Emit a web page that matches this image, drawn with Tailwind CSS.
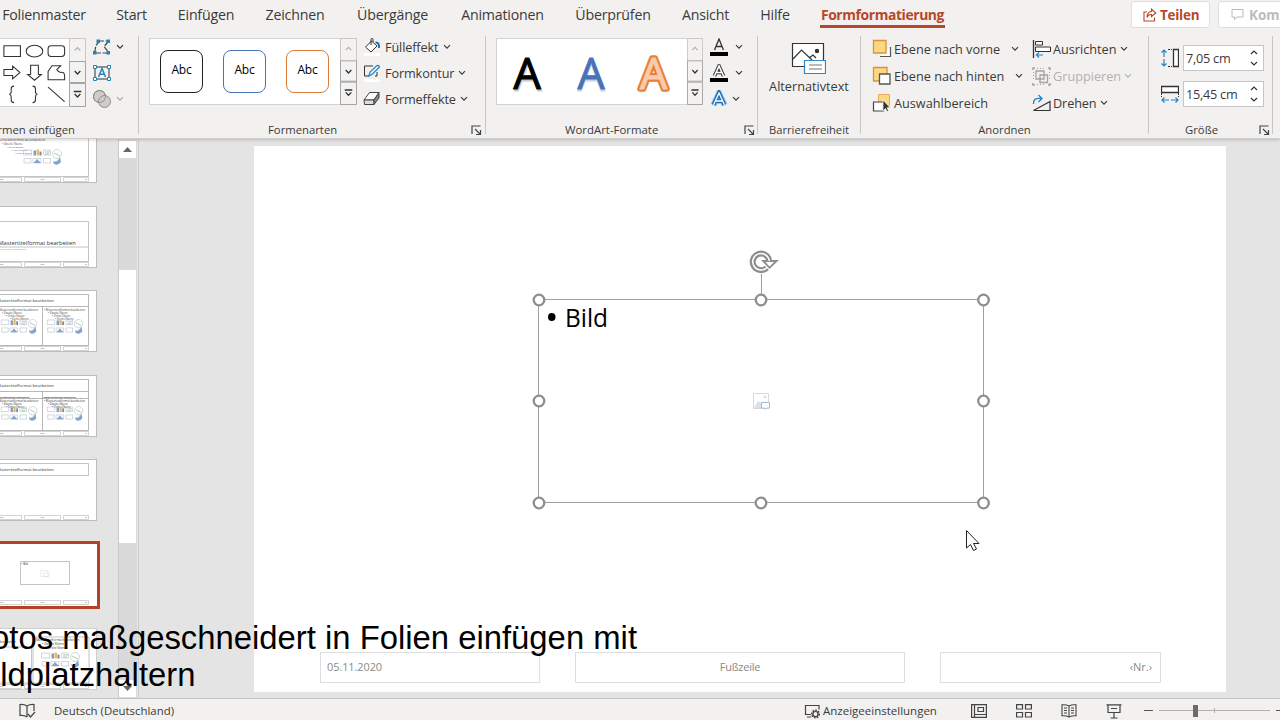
<!DOCTYPE html>
<html lang="de">
<head>
<meta charset="utf-8">
<title>Folienmaster</title>
<script src="https://cdn.jsdelivr.net/npm/@tailwindcss/browser@4"></script>
</head>
<body class="relative w-[1280px] h-[720px] overflow-hidden bg-[#e4e4e4] font-['Open_Sans','Noto_Sans',sans-serif] text-[#3b3a39] flex flex-col">

<svg class="hidden">
  <symbol id="chev" viewBox="0 0 8 6"><path d="M1 1.2 4 4.2 7 1.2" fill="none" stroke="currentColor" stroke-width="1.2"/></symbol>
  <symbol id="launch" viewBox="0 0 11 11"><path d="M1 9V1H9.500M4 4l5 5M9.500 5v4.500H5" fill="none" stroke="#444" stroke-width="1.200"/></symbol>
  <symbol id="spin" viewBox="0 0 18 69">
    <path d="M.5.5h17v68H.5z" fill="#f3f2f1" stroke="#c8c6c4"/>
    <path d="M.5 23.500h17v21H.5zM.5 45.500h17v23H.5z" fill="#f3f2f1" stroke="#a3a19f"/>
    <path d="m6 12.500 3-3 3 3" fill="none" stroke="#b0aeac" stroke-width="1.200"/>
    <path d="m6 33 3 3 3-3M5 53.500h8M6 56l3 3 3-3" fill="none" stroke="#333" stroke-width="1.400"/>
  </symbol>
  <symbol id="cluster" viewBox="0 0 40 16">
    <g fill="none" stroke="#bcc5cf" stroke-width=".7"><path d="M.5 1h8v5h-8zM20.500 1h7v5h-7zM1 9.500h7V14H1zM10 9.500h8V14h-8zM20.500 9.500h7V14h-7z"/><circle cx="34" cy="5" r="4.500"/></g>
    <path d="M10.500 1.500h2.500v5h-2.500z" fill="#7f9fc4"/><path d="M13.500.5h2.500v6h-2.500z" fill="#e6b878"/><path d="M16.500 2.500h2v4h-2z" fill="#7d8a97"/>
    <path d="m10.500 14 3.500-4 4 4zM30 12q4 2 7-4l1 5q-3 4-7 2z" fill="#84a4d0"/><path d="M22 3h5M22 5h4M31 4l6 3" stroke="#9db99d" stroke-width=".8"/>
  </symbol>
  <symbol id="foot" viewBox="0 0 96 5">
    <path d="M-2 .5h23.500v4H-2zM24.500.5h36v4h-36zM63.500.5h25v4h-25z" fill="none" stroke="#c0c0c0" stroke-width=".7"/>
    <path d="M0 2.500h3.500M40.500 2.500h4M85 2.500h2" stroke="#aaa" stroke-width=".7"/>
  </symbol>
</svg>

<!-- Ribbon -->
<header class="relative z-10 h-[139px] shrink-0 bg-[#f2f1f0] border-b border-[#cfcecd] shadow-[0_1px_3px_rgba(0,0,0,0.18)] flex flex-col">
  <nav class="h-[36px] shrink-0 flex items-start pl-[2px] text-[14.2px] leading-[30px] whitespace-nowrap text-center">
    <div class="flex gap-[30px] *:flex *:justify-center tracking-[-0.015em]">
      <span class="w-[84px]">Folienmaster</span><span class="w-[31px]">Start</span><span class="w-[58px]">Einfügen</span><span class="w-[60px]">Zeichnen</span><span class="w-[75px]">Übergänge</span><span class="w-[85px]">Animationen</span><span class="w-[76px]">Überprüfen</span><span class="w-[49px]">Ansicht</span><span class="w-[30px]">Hilfe</span>
      <span class="w-[125px] h-[28px] border-b-[3px] border-[#b7472a] text-[#b7472a] font-bold text-[13.9px] tracking-[-0.028em]">Formformatierung</span>
    </div>
    <div class="ml-auto mr-[-30px] mt-[1px] flex gap-[8px] leading-[26px] font-bold *:shrink-0">
      <div class="w-[79px] h-[27px] bg-white border border-[#e1dfdd] rounded-[3px] flex items-center pl-[11px] gap-[3px] text-[#b7472a] text-[13.5px] tracking-[-0.02em]">
        <svg class="w-[14px] h-[14px] shrink-0" viewBox="0 0 14 14" fill="none" stroke="#b7472a" stroke-width="1.100"><path d="M4 4H1v9h10.500V9.500M8.500 1.200 12.800 5 8.500 8.500V6.500C6 6.300 4.500 7.500 4 9.500 4 6 5.500 3.800 8.500 3.500z"/></svg>Teilen</div>
      <div class="w-[92px] h-[27px] bg-white border border-[#e1dfdd] rounded-[3px] flex items-center pl-[12px] gap-[5px] text-[#bdbbb9] text-[13.5px]">
        <svg class="w-[13px] h-[13px] shrink-0" viewBox="0 0 13 13" fill="none" stroke="#bdbbb9"><path d="M1 1.500h11v7.500H6L3.500 11.500V9H1z"/></svg>Kommentare</div>
    </div>
  </nav>

  <div class="h-[102px] shrink-0 flex text-[12.7px] leading-[18px] whitespace-nowrap">
    <section class="w-[139px] h-[98px] border-r border-[#c8c6c4] flex flex-col">
      <div class="h-[85px] shrink-0 flex pt-[2px]">
        <svg class="w-[69px] h-[69px] bg-white border-y border-[#d5d3d1]" viewBox="0.5 -0.5 69 69" fill="none" stroke="#333" stroke-width="1.100">
          <path d="M3.500 6.500h17v11h-17z"/><ellipse cx="35" cy="12" rx="8.500" ry="6"/><rect x="49" y="6.500" width="17" height="11" rx="3"/>
          <path d="M3.500 31h9v-3.500l7.500 6.500-7.500 6.500V37h-9zM31 26.500h8v9.500h3l-7 6-7-6h3z"/>
          <path d="M49 41.500V33l4-6h9l-4 4q2 3 4 3 4-1 4 4v3.500z"/>
          <path d="M14 48q-3 0-3 3v3q0 2-2 2.500 2 .5 2 2.500v3q0 3 3 3M33 48q3 0 3 3v3q0 2 2 2.500-2 .5-2 2.500v3q0 3-3 3M49 49l17 15"/>
        </svg>
        <svg class="w-[17px] h-[69px]" preserveAspectRatio="none" viewBox="0 0 18 69"><use href="#spin"/></svg>
        <div class="ml-[7px] flex flex-col gap-[8px] text-[#333]">
          <div class="flex items-center gap-[5px] h-[18px]">
            <svg class="w-[18px] h-[16px]" viewBox="0 0 18 16"><path d="M2 13Q2 6 6 3M15 3l-4 4.500 4 5M3 14h12M6 2h9" fill="none" stroke="#444" stroke-width="1.200" stroke-dasharray="5 1.500"/><path d="M3.500.5h3.500V4H3.500zM13.500.5H17V4h-3.500zM0 12h3.500v3.500H0zM13.500 12H17v3.500h-3.500z" fill="#2484b8"/></svg>
            <svg class="w-[8px] h-[6px]"><use href="#chev"/></svg></div>
          <svg class="w-[18px] h-[18px]" viewBox="0 0 18 18"><path d="M2 3h14v12H2z" fill="none" stroke="#333"/><path d="M5.500 13 9 4.500 12.500 13M6.800 10.300h4.400" stroke="#2484c8" stroke-width="1.500" fill="none"/><path d="M.5 1.500h3v3h-3zM14.500 1.500h3v3h-3zM.5 13.500h3v3h-3zM14.500 13.500h3v3h-3z" fill="#fff" stroke="#2484b8"/></svg>
          <div class="flex items-center gap-[5px] h-[18px] text-[#aaa]">
            <svg class="w-[18px] h-[18px]" viewBox="0 0 18 18" fill="#cfcdcb" stroke="#8f8d8b"><circle cx="6.500" cy="6.500" r="6"/><circle cx="11.500" cy="11.500" r="6"/><circle cx="6.500" cy="6.500" r="6" fill="none"/></svg>
            <svg class="w-[8px] h-[6px]"><use href="#chev"/></svg></div>
        </div>
      </div>
      <div class="w-[75px] h-[18px] shrink-0 flex justify-end text-[11.3px]">Formen einfügen</div>
    </section>

    <section class="w-[347px] h-[98px] border-r border-[#c8c6c4] flex flex-col">
      <div class="h-[85px] shrink-0 flex pt-[2px] pl-[10px]">
        <div class="w-[191px] h-[67px] bg-white border border-[#d5d3d1] border-r-0 flex items-center pl-[10px] gap-[20px] text-[12px] text-black *:size-[43px] *:rounded-[8px] *:border-[1.5px] *:flex *:items-center *:justify-center *:pb-[3px] tracking-[-0.02em]">
          <span class="border-[#222]">Abc</span><span class="border-[#4a72b8]">Abc</span><span class="border-[#e07b35]">Abc</span>
        </div>
        <svg class="w-[17px] h-[67px]" preserveAspectRatio="none" viewBox="0 0 18 69"><use href="#spin"/></svg>
        <div class="ml-[6px] flex flex-col gap-[8px] *:flex *:items-center *:h-[18px]">
          <div><svg class="w-[18px] h-[18px] mr-[4px]" viewBox="0 0 18 18"><path d="M1 15h16v3H1z" fill="#fff"/><path d="m8.500 3-6 6 5.500 5 6-6zM8 7V1.500q0-1 1-1t1 1V4" fill="#fff" stroke="#333"/><path d="M12.500 4.500q4-.5 3.500 5.500" fill="none" stroke="#1f6fb0" stroke-width="2"/></svg><span class="w-[55px] tracking-[-0.01em]">Fülleffekt</span><svg class="w-[8px] h-[6px] ml-[3px]"><use href="#chev"/></svg></div>
          <div><svg class="w-[18px] h-[18px] mr-[4px]" viewBox="0 0 18 18"><path d="M1 15h16v3H1z" fill="#fff"/><path d="M10 2H1.500v10H6M12 12h2V8" fill="none" stroke="#333"/><path d="m6 12 1-4 7-6.500q2-.5 2.500 1.500L9.500 10z" fill="#e5f1fa" stroke="#2484c8" stroke-width="1.200"/></svg><span class="w-[71px] tracking-[-0.01em]">Formkontur</span><svg class="w-[8px] h-[6px] ml-[2px]"><use href="#chev"/></svg></div>
          <div><svg class="w-[18px] h-[18px] mr-[4px]" viewBox="0 0 18 18"><path d="M6.500 2.500H16L11 10H1z" fill="#fff" stroke="#444"/><path d="M1 10h10v4.500H1.500z" fill="#ddd" stroke="#444"/><path d="M16 2.500V8l-5 6.500V10z" fill="#888" stroke="#444"/></svg><span class="w-[72px] tracking-[-0.01em]">Formeffekte</span><svg class="w-[8px] h-[6px] ml-[3px]"><use href="#chev"/></svg></div>
        </div>
      </div>
      <div class="h-[18px] shrink-0 flex items-center text-[11.3px]"><span class="ml-[129px] w-[69px]">Formenarten</span><svg class="ml-auto mr-[3px] w-[11px] h-[11px]"><use href="#launch"/></svg></div>
    </section>

    <section class="w-[272px] h-[98px] border-r border-[#c8c6c4] flex flex-col">
      <div class="h-[85px] shrink-0 flex pt-[2px] pl-[10px]">
        <svg class="w-[191px] h-[67px] bg-white border border-[#d5d3d1] border-r-0" viewBox="0 0 190 65" font-family="Open Sans, sans-serif" stroke-linejoin="round" font-size="43" text-anchor="middle">
          <text x="31" y="51.500" fill="#ccc" stroke="#ccc" stroke-width="1">A</text>
          <text x="30" y="50" fill="#000" stroke="#000" stroke-width="1.200">A</text>
          <text x="94" y="51.500" fill="#c8d3e8" stroke="#c8d3e8">A</text>
          <text x="94" y="50" fill="#4a72b8" stroke="#4a72b8" stroke-width=".8">A</text>
          <text x="156.500" y="49.500" fill="#e8803c" stroke="#e8803c" stroke-width="5.500">A</text><text x="156.500" y="49.500" fill="#f8cbad" stroke="#f8cbad" stroke-width="1">A</text>
        </svg>
        <svg class="w-[16px] h-[67px]" preserveAspectRatio="none" viewBox="0 0 18 69"><use href="#spin"/></svg>
        <div class="ml-[7px] flex flex-col gap-[8px] *:flex *:items-center *:h-[18px] *:gap-[7px]">
          <div><svg class="w-[18px] h-[18px]" viewBox="0 0 18 18"><path d="M4.500 12 9 1l4.500 11M6 8.500h6" fill="none" stroke="#333" stroke-width="1.300"/><path d="M0 14h18v4H0z"/></svg><svg class="w-[8px] h-[6px]"><use href="#chev"/></svg></div>
          <div><svg class="w-[18px] h-[18px]" viewBox="0 0 18 18"><path d="M4.500 12 9 2l4.500 10M6 8.500h6" fill="none" stroke="#333" stroke-width="3.600"/><path d="M4.500 12 9 2l4.500 10M6 8.500h6" fill="none" stroke="#fff" stroke-width="1.600"/><path d="M0 14h18v4H0z"/></svg><svg class="w-[8px] h-[6px]"><use href="#chev"/></svg></div>
          <div><svg class="w-[18px] h-[18px] mr-[-3px]" viewBox="0 0 18 18" fill="none"><path d="M3.500 15 9 3l5.500 12M5.500 11h7" stroke="#8cc4ee" stroke-width="6"/><path d="M3.500 15 9 3l5.500 12M5.500 11h7" stroke="#1c6db5" stroke-width="4"/><path d="M3.500 15 9 3l5.500 12M5.500 11h7" stroke="#fff" stroke-width="1.300"/></svg><svg class="w-[8px] h-[6px]"><use href="#chev"/></svg></div>
        </div>
      </div>
      <div class="h-[18px] shrink-0 flex items-center text-[11.4px]"><span class="ml-[79px] w-[95px]">WordArt-Formate</span><svg class="ml-auto mr-[2px] w-[11px] h-[11px]"><use href="#launch"/></svg></div>
    </section>

    <section class="w-[103px] h-[98px] border-r border-[#c8c6c4] flex flex-col items-center">
      <div class="h-[85px] shrink-0 flex flex-col items-center pt-[6px]">
        <svg class="w-[35px] h-[33px]" viewBox="0 0 35 33" fill="none" stroke="#333" stroke-width="1.200"><path d="M1.500 1.500h31v23h-31z" fill="#fff"/><path d="m2 17 8.500-9L21 18M18 16l4-3 3 3"/><circle cx="26" cy="9" r="1.600" fill="#333"/><path d="M13.500 18.500h21v13h-21z" fill="#fff" stroke="#2b88c8"/><path d="M18 23h13M18 27h13" stroke="#777"/></svg>
        <span class="mt-[2px]">Alternativtext</span>
      </div>
      <div class="h-[18px] shrink-0 text-[11.2px]">Barrierefreiheit</div>
    </section>

    <section class="w-[288px] h-[98px] border-r border-[#c8c6c4] flex flex-col">
      <div class="h-[85px] shrink-0 flex pt-[4px] pl-[11px]">
        <div class="w-[160px] flex flex-col gap-[9px] *:flex *:items-center *:h-[18px]">
          <div><svg class="w-[20px] h-[20px] mr-[2px]" viewBox="0 0 20 20"><path d="M8 17.500h10.500V8" fill="#fff" stroke="#555" stroke-width="1.200"/><path d="M1.500 1.500h12.500v12.500H1.500z" fill="#fbd982" stroke="#dc9138" stroke-width="1.300"/></svg><span class="w-[106px]">Ebene nach vorne</span><svg class="w-[8px] h-[6px] ml-[11px]"><use href="#chev"/></svg></div>
          <div><svg class="w-[20px] h-[20px] mr-[2px]" viewBox="0 0 20 20"><path d="M1.500 1.500H15V15H1.500z" fill="#fbd982" stroke="#dc9138" stroke-width="1.300"/><path d="M7.500 8H18v10H7.500z" fill="#fff" stroke="#555" stroke-width="1.300"/></svg><span class="w-[110px]">Ebene nach hinten</span><svg class="w-[8px] h-[6px] ml-[11px]"><use href="#chev"/></svg></div>
          <div><svg class="w-[20px] h-[20px] mr-[2px]" viewBox="0 0 20 20"><path d="M6.500 1.500H17.500v11h-11z" fill="#fbd982" stroke="#e5ac60"/><path d="M1.500 9h10v9h-10z" fill="#fff" stroke="#444" stroke-width="1.200"/><path d="M11 7v11l2.500-2.500 1.500 3 1.600-.8-1.500-3h3z" fill="#333" stroke="#fff" stroke-width=".7"/></svg><span>Auswahlbereich</span></div>
        </div>
        <div class="flex flex-col gap-[9px] *:flex *:items-center *:h-[18px]">
          <div><svg class="w-[19px] h-[19px] mr-[2px]" viewBox="0 0 19 19" fill="none" stroke="#333"><path d="M1.500 0v18" stroke-width="1.300"/><path d="M3.500 1.500h7v3.500h-7zM3.500 7h15v4.500h-15z" fill="#fff"/><path d="M11 15H4.500M7 12.500 4.500 15 7 17.500" stroke="#2484c8" stroke-width="1.200"/></svg><span class="w-[63px]">Ausrichten</span><svg class="w-[8px] h-[6px] ml-[4px]"><use href="#chev"/></svg></div>
          <div class="text-[#b3b1af]"><svg class="w-[19px] h-[19px] mr-[2px]" viewBox="0 0 19 19" fill="none" stroke="#a5a3a1"><path d="M4 4h8v8H4zM8 8h7.500v7.500H8z" stroke-width="1.300"/><path d="M1 3V1h2M16 1h2v2M1 16v2h2M18 16v2h-2" stroke-width="1.500"/><path d="M5 1.500h9M5 17.500h9M1.500 5v9M17.500 5v9" stroke-dasharray="1 2"/></svg><span class="w-[68px]">Gruppieren</span><svg class="w-[8px] h-[6px] ml-[3px]"><use href="#chev"/></svg></div>
          <div><svg class="w-[19px] h-[19px] mr-[2px]" viewBox="0 0 19 19" fill="none" stroke="#333"><path d="M1.500 16.500h16.500V7.500z" stroke-width="1.200"/><path d="M1.500 10Q1 3.500 9 4.500M6.500 1 10 4.500 6.500 8" stroke="#2484c8" stroke-width="1.300"/></svg><span class="w-[44px] tracking-[-0.01em]">Drehen</span><svg class="w-[8px] h-[6px] ml-[3px]"><use href="#chev"/></svg></div>
        </div>
      </div>
      <div class="h-[18px] shrink-0 text-[11.3px] flex justify-center">Anordnen</div>
    </section>

    <section class="w-[124px] h-[98px] border-r border-[#c8c6c4] flex flex-col">
      <div class="h-[85px] shrink-0 flex flex-col gap-[10px] pt-[9px] pl-[12px] *:flex *:items-center *:gap-[4px]">
        <div><svg class="w-[18px] h-[20px]" viewBox="0 0 18 20" fill="none" stroke="#333"><path d="M12.500 1.500h5v17h-5z" fill="#fff" stroke-width="1.300"/><path d="M7 1.500h4M7 18.500h4" stroke-dasharray="2 1"/><path d="M3 2v7M3 11v7M.5 4.500 3 2l2.500 2.500M.5 15.500 3 18l2.500-2.500" stroke="#2484c8" stroke-width="1.200"/></svg>
          <div class="w-[81px] h-[26px] bg-white border border-[#c8c6c4] flex items-center justify-between pl-[2px] pr-[5px] tracking-[-0.02em]">7,05 cm<svg class="w-[8px] h-[18px]" viewBox="0 0 8 18" fill="none" stroke="#333" stroke-width="1.200"><path d="m1 5 3-3 3 3M1 13l3 3 3-3"/></svg></div></div>
        <div><svg class="w-[18px] h-[20px]" viewBox="0 0 18 20" fill="none" stroke="#333"><path d="M.5 2.500h17v6H.5z" fill="#fff" stroke-width="1.300"/><path d="M.5 9v4M17.500 9v4" stroke-dasharray="2 1"/><path d="M1 16h7M10 16h7M3.500 13.500 1 16l2.500 2.500M14.500 13.500 17 16l-2.500 2.500" stroke="#2484c8" stroke-width="1.200"/></svg>
          <div class="w-[81px] h-[26px] bg-white border border-[#c8c6c4] flex items-center justify-between pl-[2px] pr-[5px] tracking-[-0.02em]">15,45 cm<svg class="w-[8px] h-[18px]" viewBox="0 0 8 18" fill="none" stroke="#333" stroke-width="1.200"><path d="m1 5 3-3 3 3M1 13l3 3 3-3"/></svg></div></div>
      </div>
      <div class="h-[18px] shrink-0 flex items-center text-[11.3px]"><span class="ml-[36px] w-[33px]">Größe</span><svg class="ml-auto mr-[2px] w-[11px] h-[11px]"><use href="#launch"/></svg></div>
    </section>
  </div>
</header>

<!-- Workspace -->
<main class="h-[559px] shrink-0 flex overflow-hidden">
  <aside class="w-[118px] flex flex-col overflow-hidden font-['Open_Sans',sans-serif]">
    <svg class="w-[97px] h-[44px] shrink-0 bg-white border-r border-b border-[#bdbdbd]" viewBox="0 0 96 43">
      <path d="M88.500 0v37.500H0" fill="none" stroke="#aaa" stroke-width=".7"/>
      <text x="0" y="2" font-size="4" fill="#444">ertextformat bearbeiten</text><text x="2" y="5.500" font-size="3" fill="#555">• Zweite Ebene</text><text x="7" y="8.500" font-size="2.500" fill="#555">• Dritte Ebene</text><text x="11" y="11.500" font-size="2.500" fill="#666">• Vierte Ebene</text><text x="15" y="14.500" font-size="2.500" fill="#666">• Fünfte Ebene</text>
      <use href="#cluster" x="23" y="10" width="40" height="16"/><use href="#foot" y="38" width="96" height="5"/>
    </svg>
    <svg class="w-[97px] h-[62px] mt-[22.500px] shrink-0 bg-white border border-l-0 border-[#bdbdbd]" viewBox="0 0 96 60">
      <path d="M0 14.500h88.500v40H0M0 40h88.500" fill="none" stroke="#aaa" stroke-width=".7"/>
      <text x="-1.500" y="37.500" font-size="5.700" fill="#333">Mastertitelformat bearbeiten</text><text x="0" y="43" font-size="2.500" fill="#888">textformat bearbeiten</text>
      <use href="#foot" y="55" width="96" height="5"/>
    </svg>
    <svg class="w-[97px] h-[62px] mt-[22.500px] shrink-0 bg-white border border-l-0 border-[#bdbdbd]" viewBox="0 0 96 60">
      <path d="M0 3.500h88.500v51H0M0 15.500h88.500M42.500 15.500v39" fill="none" stroke="#999" stroke-width=".7"/>
      <text x="-3" y="10.500" font-size="4.200" fill="#333">Mastertitelformat bearbeiten</text>
      <g font-size="2.900" fill="#444"><text x="-1" y="20">Mastertextformat bearbeiten</text><text x="2" y="23">• Zweite Ebene</text><text x="6" y="26">• Dritte Ebene</text><text x="10" y="29">• Vierte Ebene</text><text x="44" y="20">• Mastertextformat bearbeiten</text><text x="48" y="23">• Zweite Ebene</text><text x="52" y="26">• Dritte Ebene</text><text x="55" y="29">• Vierte Ebene</text></g>
      <use href="#cluster" x="0" y="28" width="39" height="15"/><use href="#cluster" x="46" y="28" width="39" height="15"/><use href="#foot" y="55" width="96" height="5"/>
    </svg>
    <svg class="w-[97px] h-[62px] mt-[22.500px] shrink-0 bg-white border border-l-0 border-[#bdbdbd]" viewBox="0 0 96 60">
      <path d="M0 3.500h88.500v51H0M0 15.500h88.500M0 22.500h88.500M42.500 15.500v39" fill="none" stroke="#999" stroke-width=".7"/>
      <text x="-3" y="10.500" font-size="4.200" fill="#333">Mastertitelformat bearbeiten</text>
      <g font-size="2.900" fill="#333"><text x="-6" y="21.500" font-weight="700" font-size="2.400">Mastertextformat bearbeiten</text><text x="43.500" y="21.500" font-weight="700" font-size="2.200">Mastertextformat bearbeiten</text><text x="-1" y="25.500">Mastertextformat bearbeiten</text><text x="2" y="29">• Zweite Ebene</text><text x="6" y="32">• Dritte Ebene</text><text x="44" y="25.500">• Mastertextformat bearbeiten</text><text x="48" y="29">• Zweite Ebene</text><text x="52" y="32">• Dritte Ebene</text></g>
      <use href="#cluster" x="0" y="30" width="39" height="15"/><use href="#cluster" x="46" y="30" width="39" height="15"/><use href="#foot" y="55" width="96" height="5"/>
    </svg>
    <svg class="w-[97px] h-[62px] mt-[22.500px] shrink-0 bg-white border border-l-0 border-[#bdbdbd]" viewBox="0 0 96 60">
      <path d="M0 3.500h88.500v12H0" fill="none" stroke="#aaa" stroke-width=".7"/>
      <text x="-3" y="10.500" font-size="4.200" fill="#333">Mastertitelformat bearbeiten</text><use href="#foot" y="55" width="96" height="5"/>
    </svg>
    <svg class="w-[100px] h-[68px] mt-[19.500px] shrink-0 bg-white border-[3px] border-l-0 border-[#b0432a]" viewBox="0 0 97 62">
      <path d="M20.500 17.500h49v23h-49z" fill="none" stroke="#aaa" stroke-width=".7"/><text x="21.500" y="21" font-size="2.600" fill="#222">• Bild</text>
      <path d="M41 26.500h7v6h-7zM44 29h5v3.500h-5z" fill="none" stroke="#ddd" stroke-width=".6"/><use href="#foot" y="56" width="96" height="5"/>
    </svg>
    <svg class="w-[97px] h-[62px] mt-[19px] shrink-0 bg-white border border-l-0 border-[#cfcfcf]" viewBox="0 0 96 60">
      <path d="M0 18h31.500v36H0M33 8h56v46H33z" fill="none" stroke="#aaa" stroke-width=".7"/>
      <g font-size="3.200" fill="#444"><text x="36" y="12">Mastertextformat bearbeiten</text><text x="42" y="16">• Zweite Ebene</text><text x="46" y="20">• Dritte Ebene</text><text x="0" y="14">bearbeiten</text></g>
      <use href="#cluster" x="41" y="23" width="40" height="16"/><use href="#foot" y="55" width="96" height="5"/>
    </svg>
  </aside>

  <!-- Scrollbar -->
  <div class="w-[19px] h-full pt-[2px] border-l border-[#cbcbcb] bg-[#dadada] flex flex-col items-start">
    <div class="w-[17px] h-[17px] shrink-0 bg-white flex items-center justify-center"><svg class="w-[9px] h-[5px]" viewBox="0 0 9 5"><path d="M0 5 4.500 0 9 5z" fill="#666"/></svg></div>
    <div class="w-[17px] h-[273px] shrink-0 bg-white mt-[112px]"></div>
    <div class="w-[17px] h-[17px] shrink-0 bg-white mt-auto mb-[1px] flex items-center justify-center"><svg class="w-[9px] h-[5px]" viewBox="0 0 9 5"><path d="M0 0 4.500 5 9 0z" fill="#666"/></svg></div>
  </div>
  <div class="w-[2px] border-r border-[#cfcfcf]"></div>

  <!-- Slide -->
  <div class="relative ml-[115px] mt-[7px] w-[972px] h-[546px] bg-white flex flex-col justify-end">
    <div class="absolute left-[285px] top-[154px] w-[445px] h-[203px] pl-[9px] text-black text-[26px] leading-[34px] font-['Open_Sans',sans-serif]">
      <div class="flex items-center gap-[9px] scale-x-[0.94] origin-left"><span class="size-[8px] rounded-full bg-black"></span><span class="pl-[1px]">Bild</span></div>
    </div>
    <svg class="absolute left-[276px] top-[96px]" width="464" height="270" viewBox="0 0 464 270" fill="none" stroke="#8e8e8e">
      <path d="M8.500 57.500h445v203H8.500zM231.500 32v20" stroke="#a0a0a0"/>
      <g stroke-width="2.300" fill="#fff"><circle cx="9" cy="58" r="5.300"/><circle cx="231" cy="58" r="5.300"/><circle cx="453.500" cy="58" r="5.300"/><circle cx="9" cy="159" r="5.300"/><circle cx="453.500" cy="159" r="5.300"/><circle cx="9" cy="261" r="5.300"/><circle cx="231" cy="261" r="5.300"/><circle cx="453.500" cy="261" r="5.300"/></g>
      <path d="M236.800 25.800A8.300 8.300 0 1 1 239.300 19.500" stroke="#8e8e8e" stroke-width="6"/><path d="M231 18h18l-9.500 9z" fill="#8e8e8e" stroke="none"/>
      <path d="M237 25.500A8.300 8.300 0 1 1 239.300 19" stroke="#fff" stroke-width="1.500"/><path d="M235.500 20h8.500l-4.500 4.500z" fill="#fff" stroke="none"/>
      <path d="M223.500 151.500h15v15h-15z" stroke="#d9d9d9"/><circle cx="235" cy="155" r="1.300" fill="#f0d3a5" stroke="none"/><path d="m224 166 4-7 5 3v4z" fill="#d6e2f0" stroke="none"/><path d="M231.500 160.500h8v5.500h-3l-1 1.500-1-1.500h-3z" fill="#fff" stroke="#a9bcd3"/>
    </svg>
    <svg class="absolute left-[711px] top-[383px]" width="16" height="24" viewBox="0 0 16 24"><path d="M1.500 1.500v17.500l4-3.500 3 6 3-1.500-3-5.500h5.500z" fill="#fff" stroke="#222"/></svg>
    <div class="flex pl-[66px] pb-[9px] gap-[35px] text-[11px] text-[#8a8a8a] *:h-[31px] *:border *:border-[#dedede] *:flex *:items-center">
      <div class="w-[220px] pl-[6px] tracking-[-0.01em]">05.11.2020</div><div class="w-[330px] justify-center tracking-[-0.02em]">Fußzeile</div><div class="w-[221px] justify-end pr-[8px]">‹Nr.›</div>
    </div>
  </div>
</main>

<!-- Status bar -->
<footer class="flex-1 bg-[#f2f1f0] border-t border-[#c3c3bf] flex items-center text-[11.4px] whitespace-nowrap pt-[3px] *:shrink-0">
  <svg class="ml-[19px] w-[17px] h-[16px]" viewBox="0 0 17 16" fill="none" stroke="#444" stroke-width="1.200"><path d="M8 14V3Q5 1 1 1.500v11q4-.5 7 1.500M8 3q3-2 7-1.500V8M9 11l2.500 3L16 9"/></svg>
  <span class="ml-[18px] w-[121px]">Deutsch (Deutschland)</span>
  <svg class="ml-[629px] w-[16px] h-[15px]" viewBox="0 0 16 15" fill="none" stroke="#444" stroke-width="1.200"><path d="M7 10.500H1.500v-9H15v4M3 13h4"/><circle cx="11.500" cy="10" r="3.600" stroke-width="1.800" stroke-dasharray="1.700 1"/><circle cx="11.500" cy="10" r="2.500"/></svg>
  <span class="ml-[3px] w-[116px] text-[11.5px]">Anzeigeeinstellungen</span>
  <svg class="ml-[32px] w-[16px] h-[14px]" viewBox="0 0 16 14" fill="none" stroke="#444" stroke-width="1.200"><path d="M.6.600h14.800v12.800H.6zM3.500 1v12M3.500 10.500h12M7 3.500h5.500v4H7z"/></svg>
  <svg class="ml-[29px] w-[16px] h-[14px]" viewBox="0 0 16 14" fill="none" stroke="#444" stroke-width="1.200"><path d="M.6.600H6.500v4.400H.6zM9.500.600h5.900v4.400H9.500zM.6 8.500H6.500v4.500H.6zM9.500 8.500h5.900v4.500H9.500z"/></svg>
  <svg class="ml-[29px] w-[16px] h-[14px]" viewBox="0 0 16 14" fill="none" stroke="#444" stroke-width="1.100"><path d="M8 13V2Q5 .3 1 .8v11Q5 11.500 8 13q3-1.500 7-1.200V.8Q11 .3 8 2M3 4h3M3 6.500h3M3 9h3M10 4h3M10 6.500h3M10 9h3"/></svg>
  <svg class="ml-[29px] w-[16px] h-[15px]" viewBox="0 0 16 15" fill="none" stroke="#444" stroke-width="1.200"><path d="M.5.800h15M2 1v7.500h12V1M5 4.500h6M8 8.500v5M4.500 14h7"/></svg>
  <svg class="ml-[21px] w-[140px] h-[14px]" viewBox="0 0 140 14" fill="none" stroke="#555"><path d="M1 6.500h9M133 6.500h9M137.500 2v9"/><path d="M16 6.500h111M71.500 4v5" stroke="#b3b1af"/><path d="M50 1h5v12h-5z" fill="#6b6b6b" stroke="none"/></svg>
</footer>

<!-- Video caption -->
<p class="absolute z-20 left-[-29px] top-[620px] text-[32.85px] leading-[36.500px] text-black whitespace-nowrap font-['Liberation_Sans',sans-serif]">Fotos maßgeschneidert in Folien einfügen mit<br>Bildplatzhaltern</p>
</body>
</html>
